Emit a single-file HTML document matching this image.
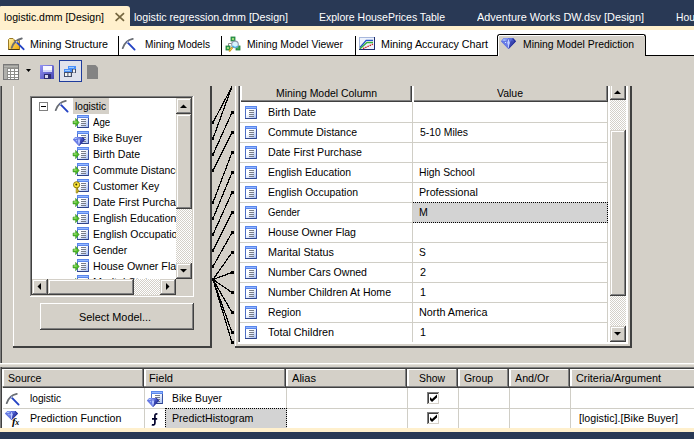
<!DOCTYPE html>
<html><head><meta charset="utf-8"><title>Mining Model Prediction</title>
<style>
html,body{margin:0;padding:0}
body{width:694px;height:439px;overflow:hidden;position:relative;background:#D4D0C8;font-family:"Liberation Sans",sans-serif;font-size:11px}
body div,body svg,body span.t{position:absolute;display:block}
span.t{white-space:pre;transform-origin:0 0}
svg{overflow:visible}
</style></head><body>
<svg width="0" height="0" style="left:0;top:0"><defs><linearGradient id="dg" x1="0" y1="0" x2="1" y2="1"><stop offset="0.35" stop-color="#FFFFFF"/><stop offset="1" stop-color="#A8C0F4"/></linearGradient></defs></svg><div style="left:0px;top:0px;width:694px;height:26px;background:#293955;"></div><div style="left:0px;top:6px;width:130px;height:21px;background:#FFF0CD;border-top-right-radius:3px;border-top-left-radius:1px"></div><div style="left:0px;top:26px;width:694px;height:4px;background:#FFF0CD;"></div><span class="t" style="left:4px;top:11px;font-size:11px;line-height:12px;color:#000;transform:scaleX(0.9565);">logistic.dmm [Design]</span><svg style="left:114px;top:12px;" width="12" height="10" viewBox="0 0 12 10"><path d="M1.6 1.2 L10 8.8 M10 1.2 L1.6 8.8" stroke="#75663F" stroke-width="1.7" fill="none"/></svg><span class="t" style="left:134px;top:11px;font-size:11px;line-height:12px;color:#fff;transform:scaleX(0.9688);">logistic regression.dmm [Design]</span><span class="t" style="left:319px;top:11px;font-size:11px;line-height:12px;color:#fff;transform:scaleX(0.9555);">Explore HousePrices Table</span><span class="t" style="left:477px;top:11px;font-size:11px;line-height:12px;color:#fff;transform:scaleX(0.9909);">Adventure Works DW.dsv [Design]</span><span class="t" style="left:675.6px;top:11px;font-size:11px;line-height:12px;color:#fff;transform:scaleX(0.9369);">HousePrices.dsv [Design]</span><div style="left:0px;top:30px;width:694px;height:25px;background:#FFFFFF;"></div><div style="left:0px;top:55px;width:694px;height:1px;background:#000;"></div><div style="left:0px;top:56px;width:694px;height:372px;background:#D4D0C8;"></div><div style="left:118px;top:36px;width:1px;height:20px;background:#000;"></div><div style="left:221px;top:36px;width:1px;height:20px;background:#000;"></div><div style="left:355px;top:36px;width:1px;height:20px;background:#000;"></div><div style="left:497px;top:34px;width:149px;height:22px;background:#D4D0C8;border:1px solid #000;border-bottom:none;border-radius:3px 3px 0 0;box-sizing:border-box"></div><div style="left:498px;top:55px;width:147px;height:1px;background:#D4D0C8;"></div><div style="left:499px;top:35px;width:145px;height:1px;background:#FFFFFF;"></div><div style="left:498px;top:36px;width:1px;height:20px;background:#FFFFFF;"></div><span class="t" style="left:30px;top:38px;font-size:11px;line-height:12px;color:#000;transform:scaleX(0.9739);">Mining Structure</span><span class="t" style="left:145px;top:38px;font-size:11px;line-height:12px;color:#000;transform:scaleX(0.9165);">Mining Models</span><span class="t" style="left:247.3px;top:38px;font-size:11px;line-height:12px;color:#000;transform:scaleX(0.9411);">Mining Model Viewer</span><span class="t" style="left:381px;top:38px;font-size:11px;line-height:12px;color:#000;transform:scaleX(0.9723);">Mining Accuracy Chart</span><span class="t" style="left:523px;top:38px;font-size:11px;line-height:12px;color:#000;transform:scaleX(0.9456);">Mining Model Prediction</span><svg style="left:8px;top:37px;" width="17" height="14" viewBox="0 0 17 14"><defs><linearGradient id="fg" x1="0" y1="0" x2="1" y2="1"><stop offset="0" stop-color="#FFF3A8"/><stop offset="1" stop-color="#EFA800"/></linearGradient></defs><path d="M0.5 2.5 L1.5 1.5 L5 1.5 L6 2.5 L6 3.5 L11.5 3.5 L11.5 12.5 L0.5 12.5 Z" fill="url(#fg)" stroke="#9A7A28" stroke-width="1"/><path d="M0.5 12.5 L11.5 12.5" stroke="#4A3A10" stroke-width="1"/><g transform="translate(3,0.6)"><path d="M0.7 10.2 C2.2 5.5 5.5 2 10.8 0.9" fill="none" stroke="#6A6E74" stroke-width="1.8" stroke-linecap="round"/><path d="M5.3 4.2 L12.6 11.6" fill="none" stroke="#2443C4" stroke-width="1.9" stroke-linecap="round"/><path d="M5 3.6 L6.2 4.9" stroke="#C8CCD4" stroke-width="1.2"/></g></svg><svg style="left:122px;top:37.5px;" width="15" height="13" viewBox="0 0 15 13"><path d="M0.7 10.2 C2.2 5.5 5.5 2 10.8 0.9" fill="none" stroke="#6A6E74" stroke-width="1.8" stroke-linecap="round"/><path d="M5.3 4.2 L12.6 11.6" fill="none" stroke="#2443C4" stroke-width="1.9" stroke-linecap="round"/><path d="M5 3.6 L6.2 4.9" stroke="#C8CCD4" stroke-width="1.2"/></svg><svg style="left:225px;top:36px;" width="17" height="17" viewBox="0 0 17 17"><path d="M3.5 10 L3.5 7.5 L8 7.5 M8.5 4 L8.5 8 M8 11.5 L14 11.5" stroke="#8C8C8C" stroke-width="1" fill="none"/><rect x="6" y="1" width="4" height="4" fill="#38A858" stroke="#1C7C38" stroke-width="0.8"/><rect x="7" y="2" width="2" height="2" fill="#A0D878"/><rect x="1" y="10" width="4" height="4" fill="#38A858" stroke="#1C7C38" stroke-width="0.8"/><rect x="2" y="11" width="2" height="2" fill="#A0D878"/><rect x="11" y="10" width="4" height="4" fill="#38A858" stroke="#1C7C38" stroke-width="0.8"/><path d="M7.2 11.6 L4.6 14.8" stroke="#C89818" stroke-width="2" stroke-linecap="round"/><path d="M6.6 12.3 L5 14.3" stroke="#FFE060" stroke-width="0.8"/><circle cx="10" cy="8.4" r="3.3" fill="#D8F4FF" stroke="#8E98AC" stroke-width="1.1"/><path d="M7.6 9.8 A3 3 0 0 0 12.6 10" stroke="#38B8F0" stroke-width="1.2" fill="none"/></svg><svg style="left:359px;top:37px;" width="16" height="13" viewBox="0 0 16 13"><rect x="0" y="0" width="16" height="13" fill="#EEF3FC"/><rect x="0" y="0" width="16" height="1" fill="#A8B8DC"/><rect x="0" y="0" width="1" height="13" fill="#A8B8DC"/><rect x="15" y="0" width="1" height="13" fill="#1E2E70"/><rect x="0" y="12" width="16" height="1" fill="#1E2E70"/><path d="M1 10.5 L7.2 3.4 L14 3.4" stroke="#2050C8" stroke-width="1.3" fill="none"/><path d="M1 11.8 L8 5.5 L14 5.5" stroke="#38B038" stroke-width="1.3" fill="none"/><path d="M4 11.6 L14 7.2" stroke="#C82020" stroke-width="1.3" fill="none" stroke-dasharray="1.6 0.8"/></svg><svg style="left:501px;top:38px;" width="15" height="11" viewBox="0 0 15 11"><polygon points="3.00,0.00 12.00,0.00 15.00,3.20 7.50,11.00 0.00,3.20" fill="#4658C8"/><polygon points="3.00,0.00 7.50,0.00 5.50,3.20 0.00,3.20" fill="#7F92F0"/><polygon points="5.50,3.20 9.50,3.20 7.50,11.00" fill="#A9B8FF"/><polygon points="7.50,0.00 12.00,0.00 9.50,3.20 5.50,3.20" fill="#5E70DC"/><polygon points="9.50,3.20 15.00,3.20 7.50,11.00" fill="#3A46B0"/><polygon points="0.00,3.20 5.50,3.20 7.50,11.00" fill="#6A7DE8"/><polygon points="6.90,1.60 8.00,1.60 7.90,9.50 7.20,9.50" fill="#C8D4FF"/><rect x="2.20" y="1.60" width="2.20" height="0.90" fill="#C0E4FF"/><rect x="4.00" y="4.00" width="1.10" height="1.00" fill="#D0ECFF"/><polygon points="12.00,0.00 15.00,3.20 7.50,11.00 8.60,9.20 13.40,3.40 11.40,0.90" fill="#262E98"/></svg><svg style="left:3px;top:64px;" width="16" height="16" viewBox="0 0 16 16"><rect x="0.5" y="0.5" width="15" height="15" fill="#D8D8D4" stroke="#787878"/><rect x="1" y="1" width="14" height="3" fill="#9C9C98"/><rect x="1" y="2" width="14" height="1" fill="#B4B4B0"/><rect x="1" y="4" width="3" height="11" fill="#B0B0AC"/><rect x="4" y="5" width="11" height="10" fill="#FFFFFF"/><path d="M4 7.5 H15 M4 10.5 H15 M4 13.5 H15" stroke="#8E8E8A" stroke-width="1"/><path d="M7.5 4 V15 M11.5 4 V15 M4.5 4 V15" stroke="#8E8E8A" stroke-width="1"/><path d="M4 4.5 H15" stroke="#8E8E8A" stroke-width="1"/></svg><svg style="left:26px;top:69px;" width="5" height="3" viewBox="0 0 5 3"><polygon points="0,0 5,0 2.5,3" fill="#000"/></svg><svg style="left:40px;top:65px;" width="14" height="14" viewBox="0 0 14 14"><defs><linearGradient id="sg" x1="0" y1="0" x2="1" y2="1"><stop offset="0" stop-color="#9494F4"/><stop offset="1" stop-color="#4444B0"/></linearGradient></defs><path d="M0 0 H13 L14 1 V14 H0 Z" fill="url(#sg)"/><rect x="3" y="1" width="9" height="6" fill="#F8F8FF"/><rect x="3" y="5" width="9" height="2" fill="#D4D8F8"/><rect x="4" y="9" width="7" height="5" fill="#2C2C70"/><rect x="5" y="10" width="3" height="3" fill="#D8D8F0"/></svg><div style="left:59px;top:60px;width:23px;height:22px;background:#E0E2EC;border:1px solid #1F3C9C;box-sizing:border-box"></div><svg style="left:64px;top:65px;" width="13" height="12" viewBox="0 0 13 12"><rect x="4" y="1" width="8" height="7" fill="#46506C"/><rect x="4" y="1" width="8" height="3" fill="#4A90FA"/><rect x="5" y="2" width="5" height="1" fill="#A0CCFF"/><rect x="9" y="4.5" width="2" height="3" fill="#F4F4F4"/><rect x="0" y="4" width="8" height="8" fill="#46506C"/><rect x="0" y="4" width="8" height="3" fill="#4A90FA"/><rect x="1" y="5" width="5" height="1" fill="#A0CCFF"/><rect x="1" y="8" width="2.4" height="3" fill="#F4F4F4"/><rect x="4.4" y="8" width="2.4" height="3" fill="#F4F4F4"/></svg><svg style="left:87px;top:65px;" width="11" height="14" viewBox="0 0 11 14"><path d="M0 0 H8.5 L11 2.5 V14 H0 Z" fill="#838383"/></svg><div style="left:0px;top:86px;width:1px;height:277px;background:#808080;"></div><div style="left:1px;top:86px;width:1px;height:277px;background:#404040;"></div><div style="left:0px;top:363px;width:694px;height:1px;background:#FFFFFF;"></div><div style="left:0px;top:364px;width:694px;height:1px;background:#E6E3DC;"></div><div style="left:13px;top:86px;width:1px;height:260px;background:#FFFFFF;"></div><div style="left:210px;top:86px;width:1px;height:262px;background:#404040;"></div><div style="left:211px;top:86px;width:1px;height:262px;background:#404040;"></div><div style="left:13px;top:346px;width:199px;height:1px;background:#404040;"></div><div style="left:13px;top:347px;width:199px;height:1px;background:#404040;"></div><div style="left:30px;top:96px;width:164px;height:201px;background:#FFFFFF;"></div><div style="left:30px;top:96px;width:163px;height:1px;background:#808080;"></div><div style="left:30px;top:96px;width:1px;height:200px;background:#808080;"></div><div style="left:31px;top:97px;width:161px;height:1px;background:#404040;"></div><div style="left:31px;top:97px;width:1px;height:198px;background:#404040;"></div><div style="left:31px;top:295px;width:162px;height:1px;background:#D4D0C8;"></div><div style="left:192px;top:97px;width:1px;height:199px;background:#D4D0C8;"></div><div style="left:30px;top:296px;width:164px;height:1px;background:#FFFFFF;"></div><div style="left:193px;top:96px;width:1px;height:201px;background:#FFFFFF;"></div><div style="left:32px;top:98px;width:144px;height:181px;overflow:hidden;background:#fff"><div style="left:7px;top:4px;width:9px;height:9px;box-sizing:border-box;border:1px solid #808080;background:#fff"></div><div style="left:9px;top:8px;width:5px;height:1px;background:#000"></div><svg style="left:23px;top:2px;" width="15" height="13" viewBox="0 0 15 13"><path d="M0.7 10.2 C2.2 5.5 5.5 2 10.8 0.9" fill="none" stroke="#6A6E74" stroke-width="1.8" stroke-linecap="round"/><path d="M5.3 4.2 L12.6 11.6" fill="none" stroke="#2443C4" stroke-width="1.9" stroke-linecap="round"/><path d="M5 3.6 L6.2 4.9" stroke="#C8CCD4" stroke-width="1.2"/></svg><div style="left:41px;top:0px;width:36px;height:16px;background:#D4D0C8;"></div><svg style="left:45px;top:17px;" width="12" height="13" viewBox="0 0 12 13"><rect x="0" y="0" width="12" height="13" fill="#4E6EC4"/><rect x="1" y="3" width="10" height="9" fill="url(#dg)"/><rect x="0" y="0" width="12" height="3" fill="#5A86EC"/><rect x="1" y="1" width="10" height="1" fill="#94B8FF"/><rect x="0" y="12" width="12" height="1" fill="#2E4288"/><rect x="11" y="3" width="1" height="10" fill="#3A52A0"/><rect x="4" y="4" width="5" height="1" fill="#787C88"/><rect x="4" y="6" width="5" height="1" fill="#787C88"/><rect x="4" y="8" width="5" height="1" fill="#787C88"/><rect x="4" y="10" width="5" height="1" fill="#787C88"/></svg><svg style="left:41px;top:20px;" width="7" height="9" viewBox="0 0 7 9"><polygon points="0,3 2.6,3 2.6,0.3 6.2,4.5 2.6,8.7 2.6,6 0,6" fill="#4CB828" stroke="#2E8A18" stroke-width="0.5"/><rect x="0.6" y="3.5" width="3" height="1" fill="#B8F090"/></svg><svg style="left:45px;top:33px;" width="12" height="13" viewBox="0 0 12 13"><rect x="0" y="0" width="12" height="13" fill="#4E6EC4"/><rect x="1" y="3" width="10" height="9" fill="url(#dg)"/><rect x="0" y="0" width="12" height="3" fill="#5A86EC"/><rect x="1" y="1" width="10" height="1" fill="#94B8FF"/><rect x="0" y="12" width="12" height="1" fill="#2E4288"/><rect x="11" y="3" width="1" height="10" fill="#3A52A0"/><rect x="4" y="4" width="5" height="1" fill="#787C88"/><rect x="4" y="6" width="5" height="1" fill="#787C88"/><rect x="4" y="8" width="5" height="1" fill="#787C88"/><rect x="4" y="10" width="5" height="1" fill="#787C88"/></svg><svg style="left:41px;top:39px;" width="12" height="9" viewBox="0 0 12 9"><polygon points="2.40,0.00 9.60,0.00 12.00,2.62 6.00,9.00 0.00,2.62" fill="#4658C8"/><polygon points="2.40,0.00 6.00,0.00 4.40,2.62 0.00,2.62" fill="#7F92F0"/><polygon points="4.40,2.62 7.60,2.62 6.00,9.00" fill="#A9B8FF"/><polygon points="6.00,0.00 9.60,0.00 7.60,2.62 4.40,2.62" fill="#5E70DC"/><polygon points="7.60,2.62 12.00,2.62 6.00,9.00" fill="#3A46B0"/><polygon points="0.00,2.62 4.40,2.62 6.00,9.00" fill="#6A7DE8"/><polygon points="5.52,1.31 6.40,1.31 6.32,7.77 5.76,7.77" fill="#C8D4FF"/><rect x="1.76" y="1.31" width="1.76" height="0.74" fill="#C0E4FF"/><rect x="3.20" y="3.27" width="0.88" height="0.82" fill="#D0ECFF"/><polygon points="9.60,0.00 12.00,2.62 6.00,9.00 6.88,7.53 10.72,2.78 9.12,0.74" fill="#262E98"/></svg><svg style="left:45px;top:49px;" width="12" height="13" viewBox="0 0 12 13"><rect x="0" y="0" width="12" height="13" fill="#4E6EC4"/><rect x="1" y="3" width="10" height="9" fill="url(#dg)"/><rect x="0" y="0" width="12" height="3" fill="#5A86EC"/><rect x="1" y="1" width="10" height="1" fill="#94B8FF"/><rect x="0" y="12" width="12" height="1" fill="#2E4288"/><rect x="11" y="3" width="1" height="10" fill="#3A52A0"/><rect x="4" y="4" width="5" height="1" fill="#787C88"/><rect x="4" y="6" width="5" height="1" fill="#787C88"/><rect x="4" y="8" width="5" height="1" fill="#787C88"/><rect x="4" y="10" width="5" height="1" fill="#787C88"/></svg><svg style="left:41px;top:52px;" width="7" height="9" viewBox="0 0 7 9"><polygon points="0,3 2.6,3 2.6,0.3 6.2,4.5 2.6,8.7 2.6,6 0,6" fill="#4CB828" stroke="#2E8A18" stroke-width="0.5"/><rect x="0.6" y="3.5" width="3" height="1" fill="#B8F090"/></svg><svg style="left:45px;top:65px;" width="12" height="13" viewBox="0 0 12 13"><rect x="0" y="0" width="12" height="13" fill="#4E6EC4"/><rect x="1" y="3" width="10" height="9" fill="url(#dg)"/><rect x="0" y="0" width="12" height="3" fill="#5A86EC"/><rect x="1" y="1" width="10" height="1" fill="#94B8FF"/><rect x="0" y="12" width="12" height="1" fill="#2E4288"/><rect x="11" y="3" width="1" height="10" fill="#3A52A0"/><rect x="4" y="4" width="5" height="1" fill="#787C88"/><rect x="4" y="6" width="5" height="1" fill="#787C88"/><rect x="4" y="8" width="5" height="1" fill="#787C88"/><rect x="4" y="10" width="5" height="1" fill="#787C88"/></svg><svg style="left:41px;top:68px;" width="7" height="9" viewBox="0 0 7 9"><polygon points="0,3 2.6,3 2.6,0.3 6.2,4.5 2.6,8.7 2.6,6 0,6" fill="#4CB828" stroke="#2E8A18" stroke-width="0.5"/><rect x="0.6" y="3.5" width="3" height="1" fill="#B8F090"/></svg><svg style="left:45px;top:81px;" width="12" height="13" viewBox="0 0 12 13"><rect x="0" y="0" width="12" height="13" fill="#4E6EC4"/><rect x="1" y="3" width="10" height="9" fill="url(#dg)"/><rect x="0" y="0" width="12" height="3" fill="#5A86EC"/><rect x="1" y="1" width="10" height="1" fill="#94B8FF"/><rect x="0" y="12" width="12" height="1" fill="#2E4288"/><rect x="11" y="3" width="1" height="10" fill="#3A52A0"/><rect x="4" y="4" width="5" height="1" fill="#787C88"/><rect x="4" y="6" width="5" height="1" fill="#787C88"/><rect x="4" y="8" width="5" height="1" fill="#787C88"/><rect x="4" y="10" width="5" height="1" fill="#787C88"/></svg><svg style="left:41px;top:83px;" width="8" height="13" viewBox="0 0 8 13"><circle cx="3.6" cy="3.8" r="3.1" fill="#FFE838" stroke="#8A7A10" stroke-width="1"/><circle cx="3.3" cy="3.4" r="1" fill="#3A3408"/><path d="M3.2 6.8 L3.2 12 L4.6 12 L4.6 10.6 L5.8 10.6 L5.8 9.2 L4.6 9.2 L4.6 6.8 Z" fill="#F4D820" stroke="#8A7A10" stroke-width="0.7"/></svg><svg style="left:45px;top:97px;" width="12" height="13" viewBox="0 0 12 13"><rect x="0" y="0" width="12" height="13" fill="#4E6EC4"/><rect x="1" y="3" width="10" height="9" fill="url(#dg)"/><rect x="0" y="0" width="12" height="3" fill="#5A86EC"/><rect x="1" y="1" width="10" height="1" fill="#94B8FF"/><rect x="0" y="12" width="12" height="1" fill="#2E4288"/><rect x="11" y="3" width="1" height="10" fill="#3A52A0"/><rect x="4" y="4" width="5" height="1" fill="#787C88"/><rect x="4" y="6" width="5" height="1" fill="#787C88"/><rect x="4" y="8" width="5" height="1" fill="#787C88"/><rect x="4" y="10" width="5" height="1" fill="#787C88"/></svg><svg style="left:41px;top:100px;" width="7" height="9" viewBox="0 0 7 9"><polygon points="0,3 2.6,3 2.6,0.3 6.2,4.5 2.6,8.7 2.6,6 0,6" fill="#4CB828" stroke="#2E8A18" stroke-width="0.5"/><rect x="0.6" y="3.5" width="3" height="1" fill="#B8F090"/></svg><svg style="left:45px;top:113px;" width="12" height="13" viewBox="0 0 12 13"><rect x="0" y="0" width="12" height="13" fill="#4E6EC4"/><rect x="1" y="3" width="10" height="9" fill="url(#dg)"/><rect x="0" y="0" width="12" height="3" fill="#5A86EC"/><rect x="1" y="1" width="10" height="1" fill="#94B8FF"/><rect x="0" y="12" width="12" height="1" fill="#2E4288"/><rect x="11" y="3" width="1" height="10" fill="#3A52A0"/><rect x="4" y="4" width="5" height="1" fill="#787C88"/><rect x="4" y="6" width="5" height="1" fill="#787C88"/><rect x="4" y="8" width="5" height="1" fill="#787C88"/><rect x="4" y="10" width="5" height="1" fill="#787C88"/></svg><svg style="left:41px;top:116px;" width="7" height="9" viewBox="0 0 7 9"><polygon points="0,3 2.6,3 2.6,0.3 6.2,4.5 2.6,8.7 2.6,6 0,6" fill="#4CB828" stroke="#2E8A18" stroke-width="0.5"/><rect x="0.6" y="3.5" width="3" height="1" fill="#B8F090"/></svg><svg style="left:45px;top:129px;" width="12" height="13" viewBox="0 0 12 13"><rect x="0" y="0" width="12" height="13" fill="#4E6EC4"/><rect x="1" y="3" width="10" height="9" fill="url(#dg)"/><rect x="0" y="0" width="12" height="3" fill="#5A86EC"/><rect x="1" y="1" width="10" height="1" fill="#94B8FF"/><rect x="0" y="12" width="12" height="1" fill="#2E4288"/><rect x="11" y="3" width="1" height="10" fill="#3A52A0"/><rect x="4" y="4" width="5" height="1" fill="#787C88"/><rect x="4" y="6" width="5" height="1" fill="#787C88"/><rect x="4" y="8" width="5" height="1" fill="#787C88"/><rect x="4" y="10" width="5" height="1" fill="#787C88"/></svg><svg style="left:41px;top:132px;" width="7" height="9" viewBox="0 0 7 9"><polygon points="0,3 2.6,3 2.6,0.3 6.2,4.5 2.6,8.7 2.6,6 0,6" fill="#4CB828" stroke="#2E8A18" stroke-width="0.5"/><rect x="0.6" y="3.5" width="3" height="1" fill="#B8F090"/></svg><svg style="left:45px;top:145px;" width="12" height="13" viewBox="0 0 12 13"><rect x="0" y="0" width="12" height="13" fill="#4E6EC4"/><rect x="1" y="3" width="10" height="9" fill="url(#dg)"/><rect x="0" y="0" width="12" height="3" fill="#5A86EC"/><rect x="1" y="1" width="10" height="1" fill="#94B8FF"/><rect x="0" y="12" width="12" height="1" fill="#2E4288"/><rect x="11" y="3" width="1" height="10" fill="#3A52A0"/><rect x="4" y="4" width="5" height="1" fill="#787C88"/><rect x="4" y="6" width="5" height="1" fill="#787C88"/><rect x="4" y="8" width="5" height="1" fill="#787C88"/><rect x="4" y="10" width="5" height="1" fill="#787C88"/></svg><svg style="left:41px;top:148px;" width="7" height="9" viewBox="0 0 7 9"><polygon points="0,3 2.6,3 2.6,0.3 6.2,4.5 2.6,8.7 2.6,6 0,6" fill="#4CB828" stroke="#2E8A18" stroke-width="0.5"/><rect x="0.6" y="3.5" width="3" height="1" fill="#B8F090"/></svg><svg style="left:45px;top:161px;" width="12" height="13" viewBox="0 0 12 13"><rect x="0" y="0" width="12" height="13" fill="#4E6EC4"/><rect x="1" y="3" width="10" height="9" fill="url(#dg)"/><rect x="0" y="0" width="12" height="3" fill="#5A86EC"/><rect x="1" y="1" width="10" height="1" fill="#94B8FF"/><rect x="0" y="12" width="12" height="1" fill="#2E4288"/><rect x="11" y="3" width="1" height="10" fill="#3A52A0"/><rect x="4" y="4" width="5" height="1" fill="#787C88"/><rect x="4" y="6" width="5" height="1" fill="#787C88"/><rect x="4" y="8" width="5" height="1" fill="#787C88"/><rect x="4" y="10" width="5" height="1" fill="#787C88"/></svg><svg style="left:41px;top:164px;" width="7" height="9" viewBox="0 0 7 9"><polygon points="0,3 2.6,3 2.6,0.3 6.2,4.5 2.6,8.7 2.6,6 0,6" fill="#4CB828" stroke="#2E8A18" stroke-width="0.5"/><rect x="0.6" y="3.5" width="3" height="1" fill="#B8F090"/></svg><svg style="left:45px;top:177px;" width="12" height="13" viewBox="0 0 12 13"><rect x="0" y="0" width="12" height="13" fill="#4E6EC4"/><rect x="1" y="3" width="10" height="9" fill="url(#dg)"/><rect x="0" y="0" width="12" height="3" fill="#5A86EC"/><rect x="1" y="1" width="10" height="1" fill="#94B8FF"/><rect x="0" y="12" width="12" height="1" fill="#2E4288"/><rect x="11" y="3" width="1" height="10" fill="#3A52A0"/><rect x="4" y="4" width="5" height="1" fill="#787C88"/><rect x="4" y="6" width="5" height="1" fill="#787C88"/><rect x="4" y="8" width="5" height="1" fill="#787C88"/><rect x="4" y="10" width="5" height="1" fill="#787C88"/></svg><svg style="left:41px;top:180px;" width="7" height="9" viewBox="0 0 7 9"><polygon points="0,3 2.6,3 2.6,0.3 6.2,4.5 2.6,8.7 2.6,6 0,6" fill="#4CB828" stroke="#2E8A18" stroke-width="0.5"/><rect x="0.6" y="3.5" width="3" height="1" fill="#B8F090"/></svg></div><div style="left:32px;top:98px;width:144px;height:181px;overflow:hidden"><span class="t" style="left:43px;top:2px;font-size:11px;line-height:12px;color:#000;transform:scaleX(0.9219);">logistic</span><span class="t" style="left:61.400000000000006px;top:18px;font-size:11px;line-height:12px;color:#000;transform:scaleX(0.8785);">Age</span><span class="t" style="left:61.400000000000006px;top:34px;font-size:11px;line-height:12px;color:#000;transform:scaleX(0.9248);">Bike Buyer</span><span class="t" style="left:61.400000000000006px;top:50px;font-size:11px;line-height:12px;color:#000;transform:scaleX(0.9648);">Birth Date</span><span class="t" style="left:61.400000000000006px;top:66px;font-size:11px;line-height:12px;color:#000;transform:scaleX(0.9428);">Commute Distance</span><span class="t" style="left:61.400000000000006px;top:82px;font-size:11px;line-height:12px;color:#000;transform:scaleX(0.9497);">Customer Key</span><span class="t" style="left:61.400000000000006px;top:98px;font-size:11px;line-height:12px;color:#000;transform:scaleX(0.9691);">Date First Purchase</span><span class="t" style="left:61.400000000000006px;top:114px;font-size:11px;line-height:12px;color:#000;transform:scaleX(0.9448);">English Education</span><span class="t" style="left:61.400000000000006px;top:130px;font-size:11px;line-height:12px;color:#000;transform:scaleX(0.9517);">English Occupation</span><span class="t" style="left:61.400000000000006px;top:146px;font-size:11px;line-height:12px;color:#000;transform:scaleX(0.9318);">Gender</span><span class="t" style="left:61.400000000000006px;top:162px;font-size:11px;line-height:12px;color:#000;transform:scaleX(0.9725);">House Owner Flag</span><span class="t" style="left:61.400000000000006px;top:178px;font-size:11px;line-height:12px;color:#000;transform:scaleX(0.9844);">Marital Status</span></div><div style="left:176px;top:98px;width:16px;height:181px;background-image:conic-gradient(#fff 25%,#D4D0C8 0 50%,#fff 0 75%,#D4D0C8 0);background-size:2px 2px"></div><div style="left:176px;top:98px;width:16px;height:16px;background:#D4D0C8;"></div><div style="left:177px;top:99px;width:14px;height:1px;background:#FFFFFF;"></div><div style="left:177px;top:99px;width:1px;height:14px;background:#FFFFFF;"></div><div style="left:176px;top:113px;width:16px;height:1px;background:#404040;"></div><div style="left:191px;top:98px;width:1px;height:16px;background:#404040;"></div><div style="left:177px;top:112px;width:14px;height:1px;background:#808080;"></div><div style="left:190px;top:99px;width:1px;height:14px;background:#808080;"></div><svg style="left:180px;top:104px;" width="7" height="4" viewBox="0 0 7 4"><polygon points="0,4 7,4 3.5,0.5" fill="#000"/></svg><div style="left:176px;top:114px;width:16px;height:95px;background:#D4D0C8;"></div><div style="left:177px;top:115px;width:14px;height:1px;background:#FFFFFF;"></div><div style="left:177px;top:115px;width:1px;height:93px;background:#FFFFFF;"></div><div style="left:176px;top:208px;width:16px;height:1px;background:#404040;"></div><div style="left:191px;top:114px;width:1px;height:95px;background:#404040;"></div><div style="left:177px;top:207px;width:14px;height:1px;background:#808080;"></div><div style="left:190px;top:115px;width:1px;height:93px;background:#808080;"></div><div style="left:176px;top:263px;width:16px;height:16px;background:#D4D0C8;"></div><div style="left:177px;top:264px;width:14px;height:1px;background:#FFFFFF;"></div><div style="left:177px;top:264px;width:1px;height:14px;background:#FFFFFF;"></div><div style="left:176px;top:278px;width:16px;height:1px;background:#404040;"></div><div style="left:191px;top:263px;width:1px;height:16px;background:#404040;"></div><div style="left:177px;top:277px;width:14px;height:1px;background:#808080;"></div><div style="left:190px;top:264px;width:1px;height:14px;background:#808080;"></div><svg style="left:180px;top:269px;" width="7" height="4" viewBox="0 0 7 4"><polygon points="0,0 7,0 3.5,3.5" fill="#000"/></svg><div style="left:32px;top:279px;width:144px;height:16px;background-image:conic-gradient(#fff 25%,#D4D0C8 0 50%,#fff 0 75%,#D4D0C8 0);background-size:2px 2px"></div><div style="left:32px;top:279px;width:16px;height:16px;background:#D4D0C8;"></div><div style="left:33px;top:280px;width:14px;height:1px;background:#FFFFFF;"></div><div style="left:33px;top:280px;width:1px;height:14px;background:#FFFFFF;"></div><div style="left:32px;top:294px;width:16px;height:1px;background:#404040;"></div><div style="left:47px;top:279px;width:1px;height:16px;background:#404040;"></div><div style="left:33px;top:293px;width:14px;height:1px;background:#808080;"></div><div style="left:46px;top:280px;width:1px;height:14px;background:#808080;"></div><svg style="left:37px;top:283px;" width="4" height="7" viewBox="0 0 4 7"><polygon points="4,0 4,7 0.5,3.5" fill="#000"/></svg><div style="left:48px;top:279px;width:86px;height:16px;background:#D4D0C8;"></div><div style="left:49px;top:280px;width:84px;height:1px;background:#FFFFFF;"></div><div style="left:49px;top:280px;width:1px;height:14px;background:#FFFFFF;"></div><div style="left:48px;top:294px;width:86px;height:1px;background:#404040;"></div><div style="left:133px;top:279px;width:1px;height:16px;background:#404040;"></div><div style="left:49px;top:293px;width:84px;height:1px;background:#808080;"></div><div style="left:132px;top:280px;width:1px;height:14px;background:#808080;"></div><div style="left:160px;top:279px;width:16px;height:16px;background:#D4D0C8;"></div><div style="left:161px;top:280px;width:14px;height:1px;background:#FFFFFF;"></div><div style="left:161px;top:280px;width:1px;height:14px;background:#FFFFFF;"></div><div style="left:160px;top:294px;width:16px;height:1px;background:#404040;"></div><div style="left:175px;top:279px;width:1px;height:16px;background:#404040;"></div><div style="left:161px;top:293px;width:14px;height:1px;background:#808080;"></div><div style="left:174px;top:280px;width:1px;height:14px;background:#808080;"></div><svg style="left:166px;top:283px;" width="4" height="7" viewBox="0 0 4 7"><polygon points="0,0 0,7 3.5,3.5" fill="#000"/></svg><div style="left:176px;top:279px;width:16px;height:16px;background:#D4D0C8;"></div><div style="left:40px;top:303px;width:154px;height:27px;background:#D4D0C8;"></div><div style="left:40px;top:303px;width:154px;height:1px;background:#FFFFFF;"></div><div style="left:40px;top:303px;width:1px;height:27px;background:#FFFFFF;"></div><div style="left:40px;top:329px;width:154px;height:1px;background:#404040;"></div><div style="left:193px;top:303px;width:1px;height:27px;background:#404040;"></div><div style="left:41px;top:328px;width:152px;height:1px;background:#808080;"></div><div style="left:192px;top:304px;width:1px;height:25px;background:#808080;"></div><span class="t" style="left:79px;top:311px;font-size:11px;line-height:12px;color:#000;transform:scaleX(0.9895);">Select Model...</span><svg style="left:0px;top:0px;pointer-events:none" width="694" height="439" viewBox="0 0 694 439"><path d="M213 122.5 L232 86.5" stroke="#000" stroke-width="1.2" fill="none" shape-rendering="crispEdges"/><rect x="212" y="121" width="2" height="3" fill="#000"/><path d="M213 138.5 L232 86.5" stroke="#000" stroke-width="1.2" fill="none" shape-rendering="crispEdges"/><rect x="212" y="137" width="2" height="3" fill="#000"/><path d="M213 154.5 L232 112.5" stroke="#000" stroke-width="1.2" fill="none" shape-rendering="crispEdges"/><rect x="212" y="153" width="2" height="3" fill="#000"/><rect x="231" y="111" width="3" height="3" fill="#000"/><path d="M213 170.5 L232 132.5" stroke="#000" stroke-width="1.2" fill="none" shape-rendering="crispEdges"/><rect x="212" y="169" width="2" height="3" fill="#000"/><rect x="231" y="131" width="3" height="3" fill="#000"/><path d="M213 202.5 L232 152.5" stroke="#000" stroke-width="1.2" fill="none" shape-rendering="crispEdges"/><rect x="212" y="201" width="2" height="3" fill="#000"/><rect x="231" y="151" width="3" height="3" fill="#000"/><path d="M213 218.5 L232 172.5" stroke="#000" stroke-width="1.2" fill="none" shape-rendering="crispEdges"/><rect x="212" y="217" width="2" height="3" fill="#000"/><rect x="231" y="171" width="3" height="3" fill="#000"/><path d="M213 234.5 L232 192.5" stroke="#000" stroke-width="1.2" fill="none" shape-rendering="crispEdges"/><rect x="212" y="233" width="2" height="3" fill="#000"/><rect x="231" y="191" width="3" height="3" fill="#000"/><path d="M213 250.5 L232 212.5" stroke="#000" stroke-width="1.2" fill="none" shape-rendering="crispEdges"/><rect x="212" y="249" width="2" height="3" fill="#000"/><rect x="231" y="211" width="3" height="3" fill="#000"/><path d="M213 266.5 L232 232.5" stroke="#000" stroke-width="1.2" fill="none" shape-rendering="crispEdges"/><rect x="212" y="265" width="2" height="3" fill="#000"/><rect x="231" y="231" width="3" height="3" fill="#000"/><path d="M213 279.5 L232 252.5" stroke="#000" stroke-width="1.2" fill="none" shape-rendering="crispEdges"/><rect x="231" y="251" width="3" height="3" fill="#000"/><path d="M213 279.5 L232 272.5" stroke="#000" stroke-width="1.2" fill="none" shape-rendering="crispEdges"/><rect x="231" y="271" width="3" height="3" fill="#000"/><path d="M213 279.5 L232 292.5" stroke="#000" stroke-width="1.2" fill="none" shape-rendering="crispEdges"/><rect x="231" y="291" width="3" height="3" fill="#000"/><path d="M213 279.5 L232 312.5" stroke="#000" stroke-width="1.2" fill="none" shape-rendering="crispEdges"/><rect x="231" y="311" width="3" height="3" fill="#000"/><path d="M213 279.5 L232 332.5" stroke="#000" stroke-width="1.2" fill="none" shape-rendering="crispEdges"/><rect x="231" y="331" width="3" height="3" fill="#000"/><path d="M213 279.5 L232 342.5" stroke="#000" stroke-width="1.2" fill="none" shape-rendering="crispEdges"/><rect x="231" y="341" width="3" height="3" fill="#000"/><rect x="212" y="278" width="2" height="3" fill="#000"/></svg><div style="left:235px;top:86px;width:1px;height:260px;background:#FFFFFF;"></div><div style="left:238px;top:86px;width:1px;height:256px;background:#808080;"></div><div style="left:239px;top:86px;width:1px;height:256px;background:#404040;"></div><div style="left:240px;top:86px;width:370px;height:256px;background:#FFFFFF;"></div><div style="left:238px;top:342px;width:390px;height:1px;background:#FFFFFF;"></div><div style="left:238px;top:343px;width:390px;height:1px;background:#FFFFFF;"></div><div style="left:626px;top:86px;width:1px;height:258px;background:#FFFFFF;"></div><div style="left:627px;top:86px;width:1px;height:258px;background:#FFFFFF;"></div><div style="left:630px;top:86px;width:1px;height:262px;background:#404040;"></div><div style="left:631px;top:86px;width:1px;height:262px;background:#404040;"></div><div style="left:235px;top:346px;width:397px;height:1px;background:#404040;"></div><div style="left:235px;top:347px;width:397px;height:1px;background:#404040;"></div><div style="left:240px;top:86px;width:368px;height:14px;background:#D4D0C8;"></div><div style="left:240px;top:86px;width:1px;height:14px;background:#FFFFFF;"></div><div style="left:241px;top:86px;width:1px;height:14px;background:#FFFFFF;"></div><div style="left:241px;top:100px;width:367px;height:1px;background:#808080;"></div><div style="left:241px;top:101px;width:367px;height:1px;background:#404040;"></div><div style="left:410px;top:86px;width:1px;height:15px;background:#808080;"></div><div style="left:411px;top:86px;width:1px;height:16px;background:#404040;"></div><div style="left:412px;top:86px;width:1px;height:16px;background:#FFFFFF;"></div><div style="left:413px;top:86px;width:1px;height:16px;background:#FFFFFF;"></div><div style="left:606px;top:86px;width:1px;height:15px;background:#808080;"></div><div style="left:607px;top:86px;width:1px;height:16px;background:#404040;"></div><span class="t" style="left:276px;top:87px;font-size:11px;line-height:12px;color:#000;transform:scaleX(0.9493);">Mining Model Column</span><span class="t" style="left:497px;top:87px;font-size:11px;line-height:12px;color:#000;transform:scaleX(0.9514);">Value</span><div style="left:607px;top:102px;width:1px;height:240px;background:#D0CEC6;"></div><div style="left:240px;top:122px;width:367px;height:1px;background:#D0CEC6;"></div><svg style="left:245px;top:106px;" width="12" height="13" viewBox="0 0 12 13"><rect x="0" y="0" width="12" height="13" fill="#4E6EC4"/><rect x="1" y="3" width="10" height="9" fill="url(#dg)"/><rect x="0" y="0" width="12" height="3" fill="#5A86EC"/><rect x="1" y="1" width="10" height="1" fill="#94B8FF"/><rect x="0" y="12" width="12" height="1" fill="#2E4288"/><rect x="11" y="3" width="1" height="10" fill="#3A52A0"/><rect x="4" y="4" width="5" height="1" fill="#787C88"/><rect x="4" y="6" width="5" height="1" fill="#787C88"/><rect x="4" y="8" width="5" height="1" fill="#787C88"/><rect x="4" y="10" width="5" height="1" fill="#787C88"/></svg><span class="t" style="left:268px;top:106px;font-size:11px;line-height:12px;color:#000;transform:scaleX(0.9812);">Birth Date</span><div style="left:240px;top:142px;width:367px;height:1px;background:#D0CEC6;"></div><svg style="left:245px;top:126px;" width="12" height="13" viewBox="0 0 12 13"><rect x="0" y="0" width="12" height="13" fill="#4E6EC4"/><rect x="1" y="3" width="10" height="9" fill="url(#dg)"/><rect x="0" y="0" width="12" height="3" fill="#5A86EC"/><rect x="1" y="1" width="10" height="1" fill="#94B8FF"/><rect x="0" y="12" width="12" height="1" fill="#2E4288"/><rect x="11" y="3" width="1" height="10" fill="#3A52A0"/><rect x="4" y="4" width="5" height="1" fill="#787C88"/><rect x="4" y="6" width="5" height="1" fill="#787C88"/><rect x="4" y="8" width="5" height="1" fill="#787C88"/><rect x="4" y="10" width="5" height="1" fill="#787C88"/></svg><span class="t" style="left:268px;top:126px;font-size:11px;line-height:12px;color:#000;transform:scaleX(0.9514);">Commute Distance</span><span class="t" style="left:419.8px;top:126px;font-size:11px;line-height:12px;color:#000;transform:scaleX(0.9458);">5-10 Miles</span><div style="left:240px;top:162px;width:367px;height:1px;background:#D0CEC6;"></div><svg style="left:245px;top:146px;" width="12" height="13" viewBox="0 0 12 13"><rect x="0" y="0" width="12" height="13" fill="#4E6EC4"/><rect x="1" y="3" width="10" height="9" fill="url(#dg)"/><rect x="0" y="0" width="12" height="3" fill="#5A86EC"/><rect x="1" y="1" width="10" height="1" fill="#94B8FF"/><rect x="0" y="12" width="12" height="1" fill="#2E4288"/><rect x="11" y="3" width="1" height="10" fill="#3A52A0"/><rect x="4" y="4" width="5" height="1" fill="#787C88"/><rect x="4" y="6" width="5" height="1" fill="#787C88"/><rect x="4" y="8" width="5" height="1" fill="#787C88"/><rect x="4" y="10" width="5" height="1" fill="#787C88"/></svg><span class="t" style="left:268px;top:146px;font-size:11px;line-height:12px;color:#000;transform:scaleX(0.9670);">Date First Purchase</span><div style="left:240px;top:182px;width:367px;height:1px;background:#D0CEC6;"></div><svg style="left:245px;top:166px;" width="12" height="13" viewBox="0 0 12 13"><rect x="0" y="0" width="12" height="13" fill="#4E6EC4"/><rect x="1" y="3" width="10" height="9" fill="url(#dg)"/><rect x="0" y="0" width="12" height="3" fill="#5A86EC"/><rect x="1" y="1" width="10" height="1" fill="#94B8FF"/><rect x="0" y="12" width="12" height="1" fill="#2E4288"/><rect x="11" y="3" width="1" height="10" fill="#3A52A0"/><rect x="4" y="4" width="5" height="1" fill="#787C88"/><rect x="4" y="6" width="5" height="1" fill="#787C88"/><rect x="4" y="8" width="5" height="1" fill="#787C88"/><rect x="4" y="10" width="5" height="1" fill="#787C88"/></svg><span class="t" style="left:268px;top:166px;font-size:11px;line-height:12px;color:#000;transform:scaleX(0.9425);">English Education</span><span class="t" style="left:419.2px;top:166px;font-size:11px;line-height:12px;color:#000;transform:scaleX(0.9405);">High School</span><div style="left:240px;top:202px;width:367px;height:1px;background:#D0CEC6;"></div><svg style="left:245px;top:186px;" width="12" height="13" viewBox="0 0 12 13"><rect x="0" y="0" width="12" height="13" fill="#4E6EC4"/><rect x="1" y="3" width="10" height="9" fill="url(#dg)"/><rect x="0" y="0" width="12" height="3" fill="#5A86EC"/><rect x="1" y="1" width="10" height="1" fill="#94B8FF"/><rect x="0" y="12" width="12" height="1" fill="#2E4288"/><rect x="11" y="3" width="1" height="10" fill="#3A52A0"/><rect x="4" y="4" width="5" height="1" fill="#787C88"/><rect x="4" y="6" width="5" height="1" fill="#787C88"/><rect x="4" y="8" width="5" height="1" fill="#787C88"/><rect x="4" y="10" width="5" height="1" fill="#787C88"/></svg><span class="t" style="left:268px;top:186px;font-size:11px;line-height:12px;color:#000;transform:scaleX(0.9496);">English Occupation</span><span class="t" style="left:419.2px;top:186px;font-size:11px;line-height:12px;color:#000;transform:scaleX(0.9711);">Professional</span><div style="left:240px;top:222px;width:367px;height:1px;background:#D0CEC6;"></div><svg style="left:245px;top:206px;" width="12" height="13" viewBox="0 0 12 13"><rect x="0" y="0" width="12" height="13" fill="#4E6EC4"/><rect x="1" y="3" width="10" height="9" fill="url(#dg)"/><rect x="0" y="0" width="12" height="3" fill="#5A86EC"/><rect x="1" y="1" width="10" height="1" fill="#94B8FF"/><rect x="0" y="12" width="12" height="1" fill="#2E4288"/><rect x="11" y="3" width="1" height="10" fill="#3A52A0"/><rect x="4" y="4" width="5" height="1" fill="#787C88"/><rect x="4" y="6" width="5" height="1" fill="#787C88"/><rect x="4" y="8" width="5" height="1" fill="#787C88"/><rect x="4" y="10" width="5" height="1" fill="#787C88"/></svg><span class="t" style="left:268px;top:206px;font-size:11px;line-height:12px;color:#000;transform:scaleX(0.8719);">Gender</span><div style="left:412px;top:202px;width:196px;height:21px;background:#D3D3D3;border:1px dotted #000;box-sizing:border-box"></div><span class="t" style="left:419.2px;top:206px;font-size:11px;line-height:12px;color:#000;transform:scaleX(0.9595);">M</span><div style="left:240px;top:242px;width:367px;height:1px;background:#D0CEC6;"></div><svg style="left:245px;top:226px;" width="12" height="13" viewBox="0 0 12 13"><rect x="0" y="0" width="12" height="13" fill="#4E6EC4"/><rect x="1" y="3" width="10" height="9" fill="url(#dg)"/><rect x="0" y="0" width="12" height="3" fill="#5A86EC"/><rect x="1" y="1" width="10" height="1" fill="#94B8FF"/><rect x="0" y="12" width="12" height="1" fill="#2E4288"/><rect x="11" y="3" width="1" height="10" fill="#3A52A0"/><rect x="4" y="4" width="5" height="1" fill="#787C88"/><rect x="4" y="6" width="5" height="1" fill="#787C88"/><rect x="4" y="8" width="5" height="1" fill="#787C88"/><rect x="4" y="10" width="5" height="1" fill="#787C88"/></svg><span class="t" style="left:268px;top:226px;font-size:11px;line-height:12px;color:#000;transform:scaleX(0.9595);">House Owner Flag</span><div style="left:240px;top:262px;width:367px;height:1px;background:#D0CEC6;"></div><svg style="left:245px;top:246px;" width="12" height="13" viewBox="0 0 12 13"><rect x="0" y="0" width="12" height="13" fill="#4E6EC4"/><rect x="1" y="3" width="10" height="9" fill="url(#dg)"/><rect x="0" y="0" width="12" height="3" fill="#5A86EC"/><rect x="1" y="1" width="10" height="1" fill="#94B8FF"/><rect x="0" y="12" width="12" height="1" fill="#2E4288"/><rect x="11" y="3" width="1" height="10" fill="#3A52A0"/><rect x="4" y="4" width="5" height="1" fill="#787C88"/><rect x="4" y="6" width="5" height="1" fill="#787C88"/><rect x="4" y="8" width="5" height="1" fill="#787C88"/><rect x="4" y="10" width="5" height="1" fill="#787C88"/></svg><span class="t" style="left:268px;top:246px;font-size:11px;line-height:12px;color:#000;transform:scaleX(0.9814);">Marital Status</span><span class="t" style="left:419.2px;top:246px;font-size:11px;line-height:12px;color:#000;transform:scaleX(0.9260);">S</span><div style="left:240px;top:282px;width:367px;height:1px;background:#D0CEC6;"></div><svg style="left:245px;top:266px;" width="12" height="13" viewBox="0 0 12 13"><rect x="0" y="0" width="12" height="13" fill="#4E6EC4"/><rect x="1" y="3" width="10" height="9" fill="url(#dg)"/><rect x="0" y="0" width="12" height="3" fill="#5A86EC"/><rect x="1" y="1" width="10" height="1" fill="#94B8FF"/><rect x="0" y="12" width="12" height="1" fill="#2E4288"/><rect x="11" y="3" width="1" height="10" fill="#3A52A0"/><rect x="4" y="4" width="5" height="1" fill="#787C88"/><rect x="4" y="6" width="5" height="1" fill="#787C88"/><rect x="4" y="8" width="5" height="1" fill="#787C88"/><rect x="4" y="10" width="5" height="1" fill="#787C88"/></svg><span class="t" style="left:268px;top:266px;font-size:11px;line-height:12px;color:#000;transform:scaleX(0.9581);">Number Cars Owned</span><span class="t" style="left:419.8px;top:266px;font-size:11px;line-height:12px;color:#000;transform:scaleX(0.9796);">2</span><div style="left:240px;top:302px;width:367px;height:1px;background:#D0CEC6;"></div><svg style="left:245px;top:286px;" width="12" height="13" viewBox="0 0 12 13"><rect x="0" y="0" width="12" height="13" fill="#4E6EC4"/><rect x="1" y="3" width="10" height="9" fill="url(#dg)"/><rect x="0" y="0" width="12" height="3" fill="#5A86EC"/><rect x="1" y="1" width="10" height="1" fill="#94B8FF"/><rect x="0" y="12" width="12" height="1" fill="#2E4288"/><rect x="11" y="3" width="1" height="10" fill="#3A52A0"/><rect x="4" y="4" width="5" height="1" fill="#787C88"/><rect x="4" y="6" width="5" height="1" fill="#787C88"/><rect x="4" y="8" width="5" height="1" fill="#787C88"/><rect x="4" y="10" width="5" height="1" fill="#787C88"/></svg><span class="t" style="left:268px;top:286px;font-size:11px;line-height:12px;color:#000;transform:scaleX(0.9580);">Number Children At Home</span><span class="t" style="left:419.8px;top:286px;font-size:11px;line-height:12px;color:#000;transform:scaleX(0.9796);">1</span><div style="left:240px;top:322px;width:367px;height:1px;background:#D0CEC6;"></div><svg style="left:245px;top:306px;" width="12" height="13" viewBox="0 0 12 13"><rect x="0" y="0" width="12" height="13" fill="#4E6EC4"/><rect x="1" y="3" width="10" height="9" fill="url(#dg)"/><rect x="0" y="0" width="12" height="3" fill="#5A86EC"/><rect x="1" y="1" width="10" height="1" fill="#94B8FF"/><rect x="0" y="12" width="12" height="1" fill="#2E4288"/><rect x="11" y="3" width="1" height="10" fill="#3A52A0"/><rect x="4" y="4" width="5" height="1" fill="#787C88"/><rect x="4" y="6" width="5" height="1" fill="#787C88"/><rect x="4" y="8" width="5" height="1" fill="#787C88"/><rect x="4" y="10" width="5" height="1" fill="#787C88"/></svg><span class="t" style="left:268px;top:306px;font-size:11px;line-height:12px;color:#000;transform:scaleX(0.9467);">Region</span><span class="t" style="left:419.2px;top:306px;font-size:11px;line-height:12px;color:#000;transform:scaleX(0.9813);">North America</span><svg style="left:245px;top:326px;" width="12" height="13" viewBox="0 0 12 13"><rect x="0" y="0" width="12" height="13" fill="#4E6EC4"/><rect x="1" y="3" width="10" height="9" fill="url(#dg)"/><rect x="0" y="0" width="12" height="3" fill="#5A86EC"/><rect x="1" y="1" width="10" height="1" fill="#94B8FF"/><rect x="0" y="12" width="12" height="1" fill="#2E4288"/><rect x="11" y="3" width="1" height="10" fill="#3A52A0"/><rect x="4" y="4" width="5" height="1" fill="#787C88"/><rect x="4" y="6" width="5" height="1" fill="#787C88"/><rect x="4" y="8" width="5" height="1" fill="#787C88"/><rect x="4" y="10" width="5" height="1" fill="#787C88"/></svg><span class="t" style="left:268px;top:326px;font-size:11px;line-height:12px;color:#000;transform:scaleX(0.9812);">Total Children</span><span class="t" style="left:419.8px;top:326px;font-size:11px;line-height:12px;color:#000;transform:scaleX(0.9796);">1</span><div style="left:412px;top:102px;width:1px;height:240px;background:#D0CEC6;"></div><div style="left:610px;top:86px;width:16px;height:256px;background-image:conic-gradient(#fff 25%,#D4D0C8 0 50%,#fff 0 75%,#D4D0C8 0);background-size:2px 2px"></div><div style="left:610px;top:84px;width:16px;height:16px;background:#D4D0C8;"></div><div style="left:611px;top:85px;width:14px;height:1px;background:#FFFFFF;"></div><div style="left:611px;top:85px;width:1px;height:14px;background:#FFFFFF;"></div><div style="left:610px;top:99px;width:16px;height:1px;background:#404040;"></div><div style="left:625px;top:84px;width:1px;height:16px;background:#404040;"></div><div style="left:611px;top:98px;width:14px;height:1px;background:#808080;"></div><div style="left:624px;top:85px;width:1px;height:14px;background:#808080;"></div><div style="left:610px;top:84px;width:16px;height:2px;background:#D4D0C8;"></div><svg style="left:614px;top:90px;" width="7" height="4" viewBox="0 0 7 4"><polygon points="0,4 7,4 3.5,0.5" fill="#000"/></svg><div style="left:610px;top:130px;width:16px;height:166px;background:#D4D0C8;"></div><div style="left:611px;top:131px;width:14px;height:1px;background:#FFFFFF;"></div><div style="left:611px;top:131px;width:1px;height:164px;background:#FFFFFF;"></div><div style="left:610px;top:295px;width:16px;height:1px;background:#404040;"></div><div style="left:625px;top:130px;width:1px;height:166px;background:#404040;"></div><div style="left:611px;top:294px;width:14px;height:1px;background:#808080;"></div><div style="left:624px;top:131px;width:1px;height:164px;background:#808080;"></div><div style="left:610px;top:326px;width:16px;height:16px;background:#D4D0C8;"></div><div style="left:611px;top:327px;width:14px;height:1px;background:#FFFFFF;"></div><div style="left:611px;top:327px;width:1px;height:14px;background:#FFFFFF;"></div><div style="left:610px;top:341px;width:16px;height:1px;background:#404040;"></div><div style="left:625px;top:326px;width:1px;height:16px;background:#404040;"></div><div style="left:611px;top:340px;width:14px;height:1px;background:#808080;"></div><div style="left:624px;top:327px;width:1px;height:14px;background:#808080;"></div><svg style="left:614px;top:332px;" width="7" height="4" viewBox="0 0 7 4"><polygon points="0,0 7,0 3.5,3.5" fill="#000"/></svg><div style="left:0px;top:367px;width:694px;height:1px;background:#808080;"></div><div style="left:0px;top:368px;width:694px;height:1px;background:#404040;"></div><div style="left:1px;top:367px;width:1px;height:61px;background:#404040;"></div><div style="left:0px;top:367px;width:1px;height:61px;background:#808080;"></div><div style="left:2px;top:369px;width:692px;height:18px;background:#D4D0C8;"></div><div style="left:2px;top:388px;width:692px;height:40px;background:#FFFFFF;"></div><div style="left:2px;top:369px;width:692px;height:1px;background:#FFFFFF;"></div><div style="left:2px;top:369px;width:1px;height:17px;background:#FFFFFF;"></div><div style="left:3px;top:386px;width:691px;height:1px;background:#808080;"></div><div style="left:3px;top:387px;width:691px;height:1px;background:#404040;"></div><div style="left:3px;top:369px;width:1px;height:17px;background:#FFFFFF;"></div><div style="left:144px;top:369px;width:1px;height:17px;background:#FFFFFF;"></div><div style="left:145px;top:369px;width:1px;height:17px;background:#FFFFFF;"></div><div style="left:142px;top:369px;width:1px;height:18px;background:#808080;"></div><div style="left:143px;top:369px;width:1px;height:19px;background:#404040;"></div><div style="left:144px;top:388px;width:1px;height:40px;background:#D0CEC6;"></div><div style="left:286px;top:369px;width:1px;height:17px;background:#FFFFFF;"></div><div style="left:287px;top:369px;width:1px;height:17px;background:#FFFFFF;"></div><div style="left:284px;top:369px;width:1px;height:18px;background:#808080;"></div><div style="left:285px;top:369px;width:1px;height:19px;background:#404040;"></div><div style="left:286px;top:388px;width:1px;height:40px;background:#D0CEC6;"></div><div style="left:407px;top:369px;width:1px;height:17px;background:#FFFFFF;"></div><div style="left:408px;top:369px;width:1px;height:17px;background:#FFFFFF;"></div><div style="left:405px;top:369px;width:1px;height:18px;background:#808080;"></div><div style="left:406px;top:369px;width:1px;height:19px;background:#404040;"></div><div style="left:407px;top:388px;width:1px;height:40px;background:#D0CEC6;"></div><div style="left:458px;top:369px;width:1px;height:17px;background:#FFFFFF;"></div><div style="left:459px;top:369px;width:1px;height:17px;background:#FFFFFF;"></div><div style="left:456px;top:369px;width:1px;height:18px;background:#808080;"></div><div style="left:457px;top:369px;width:1px;height:19px;background:#404040;"></div><div style="left:458px;top:388px;width:1px;height:40px;background:#D0CEC6;"></div><div style="left:509px;top:369px;width:1px;height:17px;background:#FFFFFF;"></div><div style="left:510px;top:369px;width:1px;height:17px;background:#FFFFFF;"></div><div style="left:507px;top:369px;width:1px;height:18px;background:#808080;"></div><div style="left:508px;top:369px;width:1px;height:19px;background:#404040;"></div><div style="left:509px;top:388px;width:1px;height:40px;background:#D0CEC6;"></div><div style="left:570px;top:369px;width:1px;height:17px;background:#FFFFFF;"></div><div style="left:571px;top:369px;width:1px;height:17px;background:#FFFFFF;"></div><div style="left:568px;top:369px;width:1px;height:18px;background:#808080;"></div><div style="left:569px;top:369px;width:1px;height:19px;background:#404040;"></div><div style="left:570px;top:388px;width:1px;height:40px;background:#D0CEC6;"></div><div style="left:3px;top:408px;width:691px;height:1px;background:#D0CEC6;"></div><span class="t" style="left:7.5px;top:372px;font-size:11px;line-height:12px;color:#000;transform:scaleX(0.9610);">Source</span><span class="t" style="left:149px;top:372px;font-size:11px;line-height:12px;color:#000;transform:scaleX(1.0066);">Field</span><span class="t" style="left:292px;top:372px;font-size:11px;line-height:12px;color:#000;transform:scaleX(1.0066);">Alias</span><span class="t" style="left:419px;top:372px;font-size:11px;line-height:12px;color:#000;transform:scaleX(0.9444);">Show</span><span class="t" style="left:464px;top:372px;font-size:11px;line-height:12px;color:#000;transform:scaleX(0.9484);">Group</span><span class="t" style="left:515px;top:372px;font-size:11px;line-height:12px;color:#000;transform:scaleX(0.9753);">And/Or</span><span class="t" style="left:576px;top:372px;font-size:11px;line-height:12px;color:#000;transform:scaleX(0.9860);">Criteria/Argument</span><svg style="left:6px;top:392.6px;" width="15" height="13" viewBox="0 0 15 13"><path d="M0.7 10.2 C2.2 5.5 5.5 2 10.8 0.9" fill="none" stroke="#6A6E74" stroke-width="1.8" stroke-linecap="round"/><path d="M5.3 4.2 L12.6 11.6" fill="none" stroke="#2443C4" stroke-width="1.9" stroke-linecap="round"/><path d="M5 3.6 L6.2 4.9" stroke="#C8CCD4" stroke-width="1.2"/></svg><span class="t" style="left:30.4px;top:392px;font-size:11px;line-height:12px;color:#000;transform:scaleX(0.9219);">logistic</span><svg style="left:5px;top:411px;" width="13" height="9" viewBox="0 0 13 9"><polygon points="2.60,0.00 10.40,0.00 13.00,2.62 6.50,9.00 0.00,2.62" fill="#4658C8"/><polygon points="2.60,0.00 6.50,0.00 4.77,2.62 0.00,2.62" fill="#7F92F0"/><polygon points="4.77,2.62 8.23,2.62 6.50,9.00" fill="#A9B8FF"/><polygon points="6.50,0.00 10.40,0.00 8.23,2.62 4.77,2.62" fill="#5E70DC"/><polygon points="8.23,2.62 13.00,2.62 6.50,9.00" fill="#3A46B0"/><polygon points="0.00,2.62 4.77,2.62 6.50,9.00" fill="#6A7DE8"/><polygon points="5.98,1.31 6.93,1.31 6.85,7.77 6.24,7.77" fill="#C8D4FF"/><rect x="1.91" y="1.31" width="1.91" height="0.74" fill="#C0E4FF"/><rect x="3.47" y="3.27" width="0.95" height="0.82" fill="#D0ECFF"/><polygon points="10.40,0.00 13.00,2.62 6.50,9.00 7.45,7.53 11.61,2.78 9.88,0.74" fill="#262E98"/></svg><div style="left:12px;top:415px;font:italic 11px 'Liberation Serif',serif;color:#000;line-height:13px;letter-spacing:-0.5px;font-weight:bold">f<span style="font-size:8px">x</span></div><span class="t" style="left:30.4px;top:412px;font-size:11px;line-height:12px;color:#000;transform:scaleX(0.9706);">Prediction Function</span><svg style="left:151px;top:391px;" width="12" height="13" viewBox="0 0 12 13"><rect x="0" y="0" width="12" height="13" fill="#4E6EC4"/><rect x="1" y="3" width="10" height="9" fill="url(#dg)"/><rect x="0" y="0" width="12" height="3" fill="#5A86EC"/><rect x="1" y="1" width="10" height="1" fill="#94B8FF"/><rect x="0" y="12" width="12" height="1" fill="#2E4288"/><rect x="11" y="3" width="1" height="10" fill="#3A52A0"/><rect x="4" y="4" width="5" height="1" fill="#787C88"/><rect x="4" y="6" width="5" height="1" fill="#787C88"/><rect x="4" y="8" width="5" height="1" fill="#787C88"/><rect x="4" y="10" width="5" height="1" fill="#787C88"/></svg><svg style="left:147px;top:398px;" width="12" height="9" viewBox="0 0 12 9"><polygon points="2.40,0.00 9.60,0.00 12.00,2.62 6.00,9.00 0.00,2.62" fill="#4658C8"/><polygon points="2.40,0.00 6.00,0.00 4.40,2.62 0.00,2.62" fill="#7F92F0"/><polygon points="4.40,2.62 7.60,2.62 6.00,9.00" fill="#A9B8FF"/><polygon points="6.00,0.00 9.60,0.00 7.60,2.62 4.40,2.62" fill="#5E70DC"/><polygon points="7.60,2.62 12.00,2.62 6.00,9.00" fill="#3A46B0"/><polygon points="0.00,2.62 4.40,2.62 6.00,9.00" fill="#6A7DE8"/><polygon points="5.52,1.31 6.40,1.31 6.32,7.77 5.76,7.77" fill="#C8D4FF"/><rect x="1.76" y="1.31" width="1.76" height="0.74" fill="#C0E4FF"/><rect x="3.20" y="3.27" width="0.88" height="0.82" fill="#D0ECFF"/><polygon points="9.60,0.00 12.00,2.62 6.00,9.00 6.88,7.53 10.72,2.78 9.12,0.74" fill="#262E98"/></svg><span class="t" style="left:172px;top:392px;font-size:11px;line-height:12px;color:#000;transform:scaleX(0.9398);">Bike Buyer</span><svg style="left:151px;top:413px;" width="7" height="13" viewBox="0 0 7 13"><path d="M6.4 1.3 C4.8 0.5 3.9 1.1 3.9 2.8 L3.9 10 C3.9 11.9 2.6 12.3 0.8 11.7 M1 5.9 H6.2" stroke="#00002A" stroke-width="1.7" fill="none"/></svg><div style="left:165px;top:408px;width:122px;height:21px;background:#D3D3D3;border:1px dotted #000;box-sizing:border-box"></div><span class="t" style="left:172px;top:412px;font-size:11px;line-height:12px;color:#000;transform:scaleX(0.9649);">PredictHistogram</span><div style="left:427px;top:392px;width:13px;height:13px;background:#FFFFFF;"></div><div style="left:427px;top:392px;width:12px;height:1px;background:#808080;"></div><div style="left:427px;top:392px;width:1px;height:12px;background:#808080;"></div><div style="left:428px;top:393px;width:10px;height:1px;background:#404040;"></div><div style="left:428px;top:393px;width:1px;height:10px;background:#404040;"></div><div style="left:427px;top:404px;width:13px;height:1px;background:#FFFFFF;"></div><div style="left:439px;top:392px;width:1px;height:13px;background:#FFFFFF;"></div><div style="left:428px;top:403px;width:11px;height:1px;background:#D4D0C8;"></div><div style="left:438px;top:393px;width:1px;height:11px;background:#D4D0C8;"></div><svg style="left:430px;top:395px;" width="7" height="7" viewBox="0 0 7 7"><polygon points="0,2 2,4 7,-0.6 7,2.4 2,7 0,5" fill="#000"/></svg><div style="left:427px;top:412px;width:13px;height:13px;background:#FFFFFF;"></div><div style="left:427px;top:412px;width:12px;height:1px;background:#808080;"></div><div style="left:427px;top:412px;width:1px;height:12px;background:#808080;"></div><div style="left:428px;top:413px;width:10px;height:1px;background:#404040;"></div><div style="left:428px;top:413px;width:1px;height:10px;background:#404040;"></div><div style="left:427px;top:424px;width:13px;height:1px;background:#FFFFFF;"></div><div style="left:439px;top:412px;width:1px;height:13px;background:#FFFFFF;"></div><div style="left:428px;top:423px;width:11px;height:1px;background:#D4D0C8;"></div><div style="left:438px;top:413px;width:1px;height:11px;background:#D4D0C8;"></div><svg style="left:430px;top:415px;" width="7" height="7" viewBox="0 0 7 7"><polygon points="0,2 2,4 7,-0.6 7,2.4 2,7 0,5" fill="#000"/></svg><span class="t" style="left:579px;top:412px;font-size:11px;line-height:12px;color:#000;transform:scaleX(0.9697);">[logistic].[Bike Buyer]</span><div style="left:0px;top:428px;width:694px;height:4px;background:#FFF0CD;"></div><div style="left:0px;top:432px;width:694px;height:7px;background:#293955;"></div>
</body></html>
